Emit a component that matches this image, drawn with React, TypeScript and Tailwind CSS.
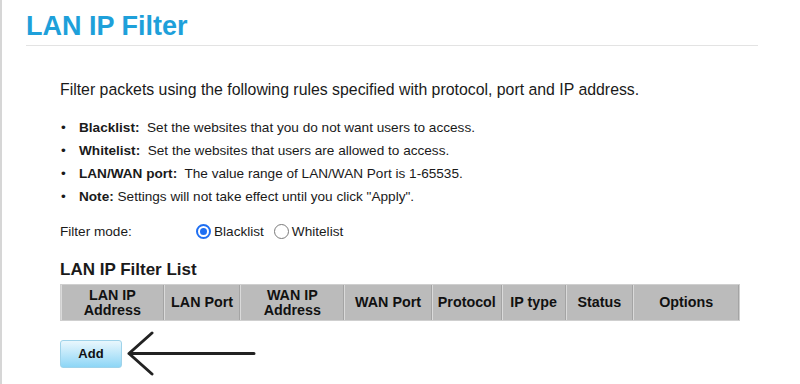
import React from "react";

const columns = [
    { label: ["LAN IP", "Address"], w: "w-[103px]" },
    { label: ["LAN Port"], w: "w-[77px]" },
    { label: ["WAN IP", "Address"], w: "w-[104px]" },
    { label: ["WAN Port"], w: "w-[88px]" },
    { label: ["Protocol"], w: "w-[70px]" },
    { label: ["IP type"], w: "w-[64px]" },
    { label: ["Status"], w: "w-[68px]" },
    { label: ["Options"], w: "w-[106px]" },
];

const notes = [
    { term: "Blacklist:", text: "\u00a0 Set the websites that you do not want users to access." },
    { term: "Whitelist:", text: "\u00a0 Set the websites that users are allowed to access." },
    { term: "LAN/WAN port:", text: "\u00a0 The value range of LAN/WAN Port is 1-65535." },
    { term: "Note:", text: " Settings will not take effect until you click \"Apply\"." },
];

function Radio({ checked }: { checked: boolean }) {
    return checked ? (
        <span className="flex h-[15px] w-[15px] shrink-0 items-center justify-center rounded-full border-2 border-[#1f6ff2] bg-white">
            <span className="h-[7px] w-[7px] rounded-full bg-[#1f6ff2]" />
        </span>
    ) : (
        <span className="block h-[15px] w-[15px] shrink-0 rounded-full border border-[#7a7a7a] bg-white" />
    );
}

export default function App() {
    return (
        <div
            className="h-[384px] w-[800px] overflow-hidden border-l-2 border-[#d6d6d6] bg-white pl-[24px] text-[#1a1a1a]"
            style={{ fontFamily: '"Liberation Sans", Arial, sans-serif' }}
        >
            <div className="w-[732px] border-b border-[#e3e3e3] pt-[11px] pb-[3px]">
                <h1 className="text-[27px] leading-[31px] font-bold text-[#1ea0da]">
                    LAN IP Filter
                </h1>
            </div>

            <div className="pl-[34px]">
                <p className="mt-[35px] text-[15.85px] leading-[18px]">
                    Filter packets using the following rules specified with protocol, port and IP address.
                </p>

                <ul className="mt-[17px] text-[13.6px] leading-[23px]">
                    {notes.map((n) => (
                        <li key={n.term} className="flex">
                            <span className="w-[19px] pl-[1px]">•</span>
                            <span>
                                <b>{n.term}</b>
                                {n.text}
                            </span>
                        </li>
                    ))}
                </ul>

                <div className="mt-[12px] flex items-center text-[13.6px] leading-[23px]">
                    <span className="w-[136px]">Filter mode:</span>
                    <Radio checked />
                    <span className="ml-[3px]">Blacklist</span>
                    <span className="ml-[10px] flex">
                        <Radio checked={false} />
                    </span>
                    <span className="ml-[3px]">Whitelist</span>
                </div>

                <h2 className="mt-[17px] text-[17px] leading-[20px] font-bold">LAN IP Filter List</h2>

                <div className="mt-[4px] flex w-[680px] border border-[#cfcfcf] bg-[#bbbbbb]">
                    {columns.map((c, i) => (
                        <div
                            key={i}
                            className={`${c.w} flex h-[35px] flex-col items-center justify-center border-r border-l border-r-[#a4a4a4] border-l-[#dadada] text-center text-[14.3px] leading-[15px] font-bold text-[#111]`}
                        >
                            {c.label.map((l) => (
                                <span key={l}>{l}</span>
                            ))}
                        </div>
                    ))}
                </div>

                <div className="mt-[10px] flex items-center">
                    <button className="h-[28px] w-[62px] shrink-0 rounded-[3px] border border-[#9fd3ea] bg-gradient-to-b from-[#e9f7fd] to-[#8dd6f6] text-[13px] font-bold text-[#111]">
                        Add
                    </button>
                    <svg width="134" height="45" viewBox="0 0 134 45" className="ml-[2px] shrink-0">
                        <path
                            d="M28 2 L5 22.5 L28 43 M5 22.5 L130 22.5"
                            fill="none"
                            stroke="#222"
                            strokeWidth="3"
                            strokeLinecap="round"
                            strokeLinejoin="round"
                        />
                    </svg>
                </div>
            </div>
        </div>
    );
}
